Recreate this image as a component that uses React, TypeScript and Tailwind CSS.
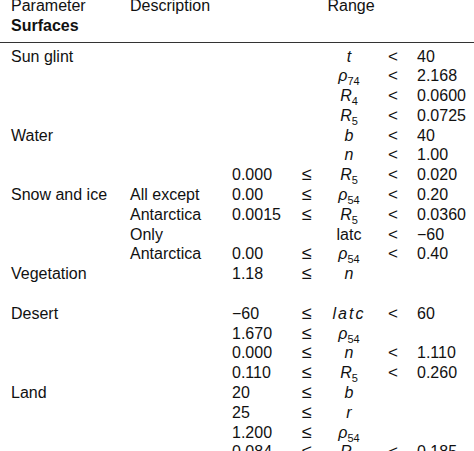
import type { ReactNode } from "react";

type Row = {
  p?: string;
  d?: string;
  lo?: string;
  le?: boolean;
  v?: ReactNode;
  lt?: boolean;
  hi?: string;
};

function V({ s, sub, upright, spaced }: { s: string; sub?: string; upright?: boolean; spaced?: boolean }) {
  return (
    <span className={`${upright ? "" : "italic"} ${spaced ? "tracking-[2px]" : ""}`}>
      {s}
      {sub && <span className="relative top-[4px] text-[11px] not-italic tracking-normal">{sub}</span>}
    </span>
  );
}

const rows: Row[] = [
  { p: "Sun glint", v: <V s="t" />, lt: true, hi: "40" },
  { v: <V s="ρ" sub="74" />, lt: true, hi: "2.168" },
  { v: <V s="R" sub="4" />, lt: true, hi: "0.0600" },
  { v: <V s="R" sub="5" />, lt: true, hi: "0.0725" },
  { p: "Water", v: <V s="b" />, lt: true, hi: "40" },
  { v: <V s="n" />, lt: true, hi: "1.00" },
  { lo: "0.000", le: true, v: <V s="R" sub="5" />, lt: true, hi: "0.020" },
  { p: "Snow and ice", d: "All except", lo: "0.00", le: true, v: <V s="ρ" sub="54" />, lt: true, hi: "0.20" },
  { d: "Antarctica", lo: "0.0015", le: true, v: <V s="R" sub="5" />, lt: true, hi: "0.0360" },
  { d: "Only", v: <V s="latc" upright />, lt: true, hi: "−60" },
  { d: "Antarctica", lo: "0.00", le: true, v: <V s="ρ" sub="54" />, lt: true, hi: "0.40" },
  { p: "Vegetation", lo: "1.18", le: true, v: <V s="n" /> },
  {},
  { p: "Desert", lo: "−60", le: true, v: <V s="latc" spaced />, lt: true, hi: "60" },
  { lo: "1.670", le: true, v: <V s="ρ" sub="54" /> },
  { lo: "0.000", le: true, v: <V s="n" />, lt: true, hi: "1.110" },
  { lo: "0.110", le: true, v: <V s="R" sub="5" />, lt: true, hi: "0.260" },
  { p: "Land", lo: "20", le: true, v: <V s="b" /> },
  { lo: "25", le: true, v: <V s="r" /> },
  { lo: "1.200", le: true, v: <V s="ρ" sub="54" /> },
  { lo: "0.084", le: true, v: <V s="R" sub="5" />, lt: true, hi: "0.185" },
];

const cols = "grid grid-cols-[119px_102px_70px_18px_58px_39px_1fr] pl-[11px] whitespace-nowrap";
const grid = `${cols} leading-[19.8px] h-[19.8px]`;
const head = `${cols} leading-[12px] h-[20px]`;

export default function App() {
  return (
    <div className="w-[474px] h-[451px] overflow-hidden bg-white text-[#111] text-[16px] font-['Liberation_Sans',Arial,sans-serif]">
      <div>
        <div className={head}>
          <div>Parameter</div>
          <div>Description</div>
          <div className="col-span-5 text-center pr-[4px]">Range</div>
        </div>
        <div className={head}>
          <div className="font-bold">Surfaces</div>
        </div>
      </div>
      <div className="mt-[1.5px] h-[1.5px] bg-[#333]" />
      <div className="mt-[3.5px]">
        {rows.map((r, i) => (
          <div key={i} className={grid}>
            <div>{r.p}</div>
            <div>{r.d}</div>
            <div>{r.lo}</div>
            <div className="text-[18px]">{r.le ? "≤" : ""}</div>
            <div className="text-center">{r.v}</div>
            <div className="pl-[10px] text-[17px]">{r.lt ? "<" : ""}</div>
            <div>{r.hi}</div>
          </div>
        ))}
      </div>
    </div>
  );
}
